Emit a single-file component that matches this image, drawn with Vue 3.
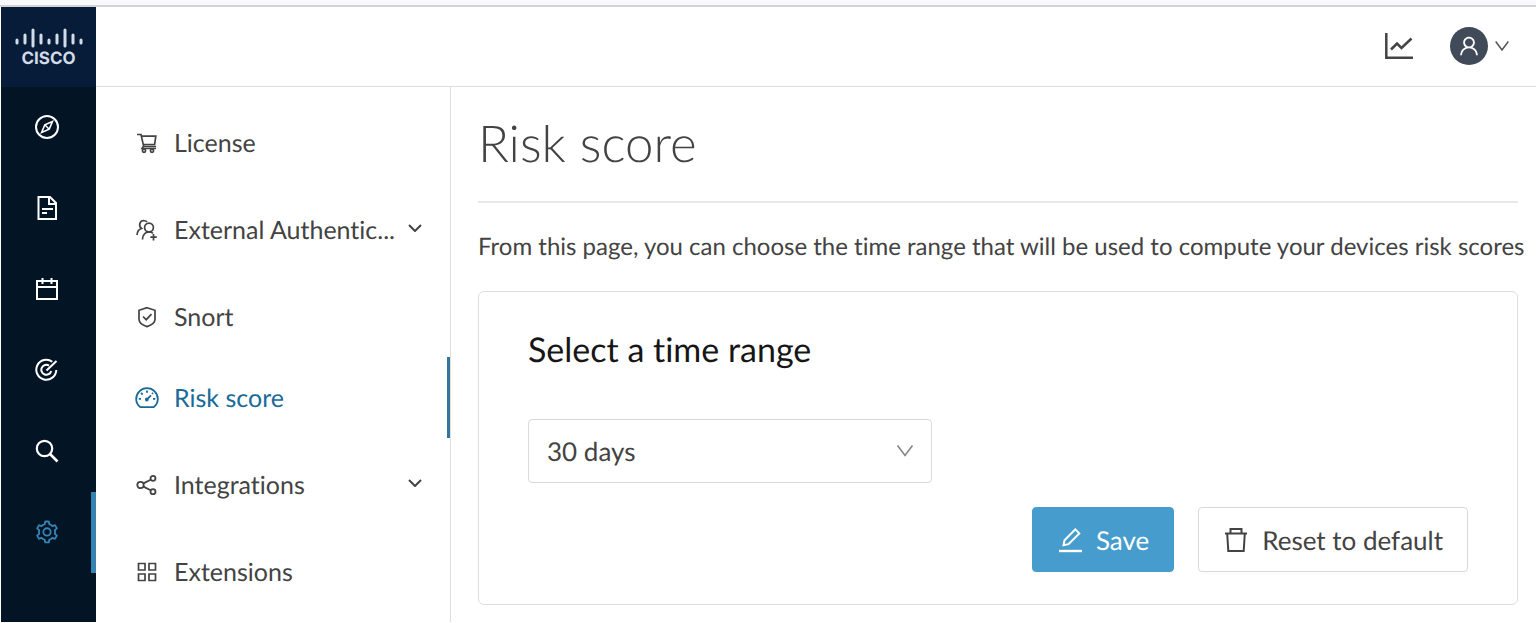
<script setup>
import { ref } from 'vue'

const range = ref('30 days')
const ranges = ['7 days', '30 days', '90 days']

const bars = [
  { x: 2, y: 11, h: 5 },
  { x: 10, y: 6, h: 10 },
  { x: 18, y: 1, h: 18 },
  { x: 26, y: 6, h: 10 },
  { x: 34, y: 11, h: 5 },
  { x: 42, y: 6, h: 10 },
  { x: 50, y: 1, h: 18 },
  { x: 58, y: 6, h: 10 },
  { x: 66, y: 11, h: 5 }
]
</script>

<template>
  <div class="page">
    <div class="strip"></div>
    <div class="shell">
      <nav class="rail" aria-label="Main">
        <a class="logo" href="#" aria-label="Cisco home">
          <svg width="68" height="20" viewBox="0 0 68 20" fill="none" stroke="#d3dbe8" stroke-width="3" stroke-linecap="round">
            <path v-for="b in bars" :key="b.x" :d="`M${b.x} ${b.y + 1}v${b.h - 2}`" />
          </svg>
          <span class="brand">CISCO</span>
        </a>
        <a class="rail-item" href="#" aria-label="Explore">
          <svg class="i24" viewBox="0 0 24 24" fill="none" stroke="currentColor" stroke-width="2">
            <circle cx="12" cy="12" r="11" />
            <path d="M17.4 6.6l-3.2 7.6-7.6 3.2 3.2-7.6zM9.8 9.8l4.4 4.4" stroke-width="1.6" />
          </svg>
        </a>
        <a class="rail-item" href="#" aria-label="Reports">
          <svg class="i24" viewBox="0 0 24 24" fill="none" stroke="currentColor" stroke-width="2">
            <path d="M3.5 1H15l6 6v16H3.5zM14 1v7h7M7 13h11M7 17h5" />
          </svg>
        </a>
        <a class="rail-item" href="#" aria-label="Events">
          <svg class="i24" viewBox="0 0 24 24" fill="none" stroke="currentColor" stroke-width="2">
            <path d="M2 4h20v18H2zM2 10h20M7.500 1v6M16.500 1v6" />
          </svg>
        </a>
        <a class="rail-item" href="#" aria-label="Monitor">
          <svg class="i24" viewBox="0 0 24 24" fill="none" stroke="currentColor" stroke-width="2">
            <path d="M17.300 3.700A10 10 0 1 0 21.300 12M14 7.600A5 5 0 1 0 16.200 13M11.500 12.500L21.500 3" />
          </svg>
        </a>
        <a class="rail-item" href="#" aria-label="Search">
          <svg class="i24" viewBox="0 0 24 24" fill="none" stroke="currentColor" stroke-width="2.200">
            <circle cx="9.500" cy="9.500" r="7.700" />
            <path d="M15 15l7.500 7.500" stroke-width="2.600" />
          </svg>
        </a>
        <a class="rail-item active" href="#" aria-label="Settings" aria-current="page">
          <svg class="i26" viewBox="0 0 1024 1024" fill="currentColor">
            <path d="M924.8 625.7l-65.5-56c3.1-19 4.7-38.4 4.7-57.8s-1.6-38.8-4.7-57.8l65.5-56a32.03 32.03 0 009.3-35.2l-.9-2.6a443.74 443.74 0 00-79.7-137.900l-1.800-2.100a32.12 32.12 0 00-35.100-9.500l-81.300 28.900c-30-24.600-63.500-44-99.700-57.600l-15.700-85a32.05 32.05 0 00-25.800-25.700l-2.700-.5c-52.100-9.400-106.900-9.400-159 0l-2.700.5a32.05 32.05 0 00-25.800 25.700l-15.800 85.400a351.860 351.860 0 00-99 57.400l-81.900-29.100a32 32 0 00-35.100 9.500l-1.800 2.100a446.020 446.020 0 00-79.700 137.900l-.9 2.600c-4.500 12.500-.8 26.500 9.300 35.200l66.300 56.600c-3.100 18.800-4.600 38-4.600 57.100 0 19.200 1.500 38.400 4.600 57.100L99 625.500a32.030 32.030 0 00-9.300 35.200l.9 2.600c18.100 50.400 44.900 96.900 79.700 137.900l1.800 2.100a32.120 32.120 0 0035.100 9.500l81.900-29.100c29.800 24.500 63.100 43.900 99 57.400l15.800 85.400a32.050 32.050 0 0025.800 25.700l2.700.5a449.400 449.400 0 00159 0l2.700-.5a32.050 32.050 0 0025.800-25.700l15.700-85a350 350 0 0099.700-57.600l81.300 28.900a32 32 0 0035.100-9.500l1.800-2.100c34.800-41.100 61.600-87.500 79.700-137.900l.9-2.600c4.500-12.300.8-26.300-9.300-35zM788.300 465.900c2.500 15.100 3.800 30.600 3.800 46.100s-1.300 31-3.800 46.100l-6.600 40.100 74.700 63.900a370.030 370.030 0 01-42.600 73.600L721 702.800l-31.400 25.800c-23.900 19.600-50.500 35-79.300 45.800l-38.100 14.300-17.900 97a377.500 377.500 0 01-85 0l-17.900-97.200-37.800-14.500c-28.500-10.800-55-26.200-78.700-45.700l-31.400-25.900-93.400 33.200c-17-22.900-31.200-47.600-42.600-73.600l75.500-64.500-6.500-40c-2.400-14.900-3.700-30.300-3.700-45.500 0-15.300 1.200-30.600 3.700-45.500l6.500-40-75.500-64.500c11.300-26.100 25.600-50.700 42.600-73.600l93.400 33.200 31.400-25.900c23.700-19.500 50.200-34.900 78.700-45.700l37.900-14.300 17.900-97.200c28.100-3.200 56.800-3.200 85 0l17.900 97 38.100 14.300c28.700 10.800 55.400 26.200 79.300 45.800l31.400 25.800 92.800-32.900c17 22.900 31.200 47.600 42.600 73.600L781.800 426l6.500 39.900z" />
            <circle cx="512" cy="510" r="145" fill="none" stroke="currentColor" stroke-width="72" />
          </svg>
        </a>
      </nav>

      <div class="body">
        <header class="topbar">
          <button class="plain" type="button" aria-label="Charts">
            <svg width="30" height="28" viewBox="0 0 30 28" fill="none" stroke="#444" stroke-width="2.500">
              <path d="M2.300 1v24.700H29M7 17.500l6-6 4.500 4.500L27.500 6.500" />
            </svg>
          </button>
          <button class="plain account" type="button" aria-label="Account">
            <span class="avatar">
              <svg width="24" height="24" viewBox="0 0 1024 1024" fill="#fff">
                <path d="M858.500 763.600a374 374 0 00-80.600-119.500 375.630 375.630 0 00-119.500-80.600c-.4-.2-.8-.3-1.200-.5C719.500 518 760 444.700 760 362c0-137-111-248-248-248S264 225 264 362c0 82.700 40.500 156 102.800 201.100-.4.2-.8.3-1.200.5-44.800 18.900-85 46-119.500 80.600a375.630 375.630 0 00-80.600 119.500A371.700 371.700 0 00136 901.800a8 8 0 008 8.200h60c4.400 0 7.900-3.500 8-7.800 2-77.200 33-149.500 87.800-204.300 56.700-56.700 132-87.900 212.200-87.900s155.500 31.200 212.200 87.900C779 752.700 810 825 812 902.200c.1 4.400 3.600 7.800 8 7.800h60a8 8 0 008-8.200c-1-47.800-10.900-94.300-29.500-138.200zM512 534c-45.900 0-89.100-17.900-121.600-50.400S340 407.900 340 362c0-45.900 17.900-89.100 50.400-121.600S466.100 190 512 190s89.100 17.900 121.600 50.400S684 316.100 684 362c0 45.900-17.900 89.100-50.400 121.600S557.900 534 512 534z" />
              </svg>
            </span>
            <svg width="14" height="10" viewBox="0 0 14 10" fill="none" stroke="#555" stroke-width="1.500">
              <path d="M.7.5L7 9 13.300.5" />
            </svg>
          </button>
        </header>

        <div class="columns">
          <nav class="menu" aria-label="Settings">
            <a class="entry" href="#">
              <svg class="i24" viewBox="0 0 24 24" fill="none" stroke="currentColor" stroke-width="1.700">
                <path d="M2 3.500h4L8.700 15.500H21M6.500 5.200h14.300L19.600 13.500H8.200M8.300 15.500L7 17.500h14" />
                <circle cx="9" cy="19.700" r="1.600" />
                <circle cx="17" cy="19.700" r="1.600" />
              </svg>
              <span class="label">License</span>
            </a>
            <a class="entry group" href="#">
              <svg class="i24" viewBox="0 0 24 24" fill="none" stroke="currentColor" stroke-width="1.700">
                <circle cx="14" cy="9.500" r="4.400" />
                <path d="M7.500 21.500c0-4.500 2.800-7.600 6.500-7.600 1.600 0 2.800.4 4 1.400M18.500 16v6.500M15.300 19.200h6.500M2 17c.2-3.500 1.800-5.600 4.500-6.500C3.300 8.200 4.500 2.700 8.500 2.500c1.700 0 2.700.5 3.600 1.400" />
              </svg>
              <span class="label">External Authentic...</span>
              <svg class="arrow" viewBox="0 0 14 8" fill="none" stroke="currentColor" stroke-width="2"><path d="M1 1l6 6 6-6" /></svg>
            </a>
            <a class="entry" href="#">
              <svg class="i24" viewBox="0 0 24 24" fill="none" stroke="currentColor" stroke-width="1.700">
                <path d="M12 2.700l8 2.600v9c0 3.700-4 6-8 7.300-4-1.300-8-3.600-8-7.300v-9zM8 11.500l3.200 3.200 5.300-5.500" />
              </svg>
              <span class="label">Snort</span>
            </a>
            <a class="entry active" href="#" aria-current="page">
              <svg class="i24" viewBox="0 0 24 24" fill="none" stroke="currentColor" stroke-width="1.800">
                <path d="M5.500 21.200C2.500 19 1.200 16.200 1.200 13a10.800 10.800 0 0 1 21.600 0c0 3.200-1.300 6-4.300 8.200zM11.500 13.800L16 9.300" />
                <path d="M12 4.500v2.300M3.700 12.800H6M18 12.800h2.300M6 6.900l1.700 1.700M18 6.900l-1 1" />
                <circle cx="11.800" cy="13.500" r="1" />
              </svg>
              <span class="label">Risk score</span>
            </a>
            <a class="entry group" href="#">
              <svg class="i24" viewBox="0 0 24 24" fill="none" stroke="currentColor" stroke-width="1.800">
                <circle cx="5.500" cy="12" r="3.200" />
                <circle cx="18" cy="5.300" r="2.500" />
                <circle cx="18" cy="18.700" r="2.500" />
                <path d="M8.400 10.400l7.300-3.700M8.400 13.600l7.300 3.700" />
              </svg>
              <span class="label">Integrations</span>
              <svg class="arrow" viewBox="0 0 14 8" fill="none" stroke="currentColor" stroke-width="2"><path d="M1 1l6 6 6-6" /></svg>
            </a>
            <a class="entry" href="#">
              <svg class="i24" viewBox="0 0 24 24" fill="none" stroke="currentColor" stroke-width="1.700">
                <path d="M3.500 3.500h6.500v6.500H3.500zM14 3.500h6.500v6.500H14zM3.500 14h6.500v6.500H3.500zM14 14h6.500v6.500H14z" />
              </svg>
              <span class="label">Extensions</span>
            </a>
          </nav>

          <main class="main">
            <h1>Risk score</h1>
            <p class="intro">From this page, you can choose the time range that will be used to compute your devices risk scores</p>
            <section class="card">
              <h2><label for="range">Select a time range</label></h2>
              <div class="select">
                <select id="range" v-model="range">
                  <option v-for="r in ranges" :key="r">{{ r }}</option>
                </select>
                <svg class="caret" width="18" height="12" viewBox="0 0 18 12" fill="none" stroke="#858585" stroke-width="1.600">
                  <path d="M1.500.5L9 10.500 16.500.5" />
                </svg>
              </div>
              <div class="actions">
                <button class="btn primary" type="button">
                  <svg class="i26" viewBox="0 0 26 26" fill="none" stroke="currentColor" stroke-width="2">
                    <path d="M2 24h23" stroke-width="2.400" />
                    <path d="M6.500 18.200l1-5L18.300 2.400l4 4L11.500 17.200z" />
                  </svg>
                  Save
                </button>
                <button class="btn" type="button">
                  <svg class="i26" viewBox="0 0 26 26" fill="none" stroke="currentColor" stroke-width="2">
                    <path d="M2 6.500h22M7.500 6.500V2h11v4.500M4.200 6.500L5.300 24h15.400l1.100-17.500" />
                  </svg>
                  Reset to default
                </button>
              </div>
            </section>
          </main>
        </div>
      </div>
    </div>
  </div>
</template>

<style>
body {
  background: #fff;
}
</style>

<style scoped>
* {
  box-sizing: border-box;
}
.page {
  min-height: 100vh;
  display: flex;
  flex-direction: column;
  padding: 0 0 1px 1px;
  font-family: Lato, "Liberation Sans", sans-serif;
  font-size: 24px;
  line-height: 32px;
  font-variant-ligatures: none;
  text-rendering: geometricPrecision;
  color: #434343;
}
a {
  color: inherit;
  text-decoration: none;
}
button,
select {
  font: inherit;
  font-variant-ligatures: none;
  text-rendering: inherit;
  color: inherit;
}
svg {
  display: block;
  flex: none;
}
.i24 {
  width: 24px;
  height: 24px;
}
.i26 {
  width: 26px;
  height: 26px;
}
.strip {
  height: 7px;
  margin-left: -1px;
  background: #f9f9fb;
  border-bottom: 2px solid #d2d3d5;
}
.shell {
  flex: 1;
  display: flex;
}
.rail {
  width: 95px;
  flex: none;
  background: #031425;
  color: #fff;
}
.logo {
  height: 80px;
  display: flex;
  flex-direction: column;
  align-items: center;
  justify-content: center;
  gap: 2px;
  padding-top: 2px;
  background: #061c38;
}
.brand {
  font-family: Inter, Lato, sans-serif;
  font-size: 17px;
  line-height: 18px;
  font-weight: 700;
  color: #d3dbe8;
}
.rail-item {
  height: 81px;
  display: flex;
  align-items: center;
  justify-content: center;
  padding: 0 4px 2px 0;
  position: relative;
}
.rail-item.active {
  color: #3584b4;
}
.rail-item.active::after {
  content: "";
  position: absolute;
  right: 0;
  top: 0;
  bottom: 0;
  width: 5px;
  background: #3682b0;
}
.body {
  flex: 1;
  min-width: 0;
  display: flex;
  flex-direction: column;
}
.topbar {
  height: 80px;
  border-bottom: 1px solid #dedede;
  display: flex;
  align-items: center;
  justify-content: flex-end;
  gap: 36px;
  padding: 0 27px 2px 0;
}
.plain {
  display: flex;
  align-items: center;
  padding: 0;
  border: 0;
  background: none;
}
.account {
  gap: 7px;
}
.avatar {
  width: 38px;
  height: 38px;
  border-radius: 50%;
  background: #414a58;
  display: flex;
  align-items: center;
  justify-content: center;
}
.columns {
  flex: 1;
  display: flex;
}
.menu {
  width: 355px;
  flex: none;
  padding-top: 15px;
  border-right: 1px solid #dedede;
  font-size: 25px;
}
.entry {
  height: 81px;
  display: flex;
  align-items: center;
  padding: 0 28px 0 39px;
  position: relative;
}
.entry .label {
  margin-left: 15px;
  white-space: nowrap;
}
.entry.group {
  height: 93px;
}
.arrow {
  width: 14px;
  height: 8px;
  margin: 0 0 4px auto;
}
.entry.active {
  color: #196a96;
}
.entry.active::after {
  content: "";
  position: absolute;
  right: 0;
  top: 0;
  bottom: 0;
  width: 3px;
  background: #35739a;
}
.main {
  flex: 1;
  min-width: 0;
  padding: 22px 18px 16px 27px;
}
h1 {
  margin: 0;
  padding: 2px 0 26px;
  border-bottom: 2px solid #e8e8e8;
  font-size: 51px;
  line-height: 64px;
  font-weight: 300;
}
.intro {
  margin: 28px 0;
  white-space: nowrap;
}
.card {
  border: 1px solid #dedede;
  border-radius: 6px;
  padding: 38px 49px 32px;
}
h2 {
  margin: 0 0 49px;
  font-size: 34px;
  line-height: 40px;
  font-weight: 400;
  color: #161616;
}
.select {
  position: relative;
  width: 404px;
  max-width: 100%;
}
select {
  display: block;
  appearance: none;
  width: 100%;
  height: 64px;
  padding: 0 18px;
  border: 1px solid #d9d9d9;
  border-radius: 4px;
  background: #fff;
  font-size: 26px;
}
.caret {
  position: absolute;
  right: 18px;
  top: 26px;
  pointer-events: none;
}
.actions {
  display: flex;
  justify-content: flex-end;
  gap: 24px;
  margin-top: 24px;
}
.btn {
  height: 65px;
  display: flex;
  align-items: center;
  gap: 13px;
  padding: 0 24px;
  border: 1px solid #d9d9d9;
  border-radius: 4px;
  background: #fff;
  font-size: 26px;
  box-shadow: 0 2px 2px rgba(0, 0, 0, 0.02);
}
.btn.primary {
  border-color: #469ccc;
  background: #469ccc;
  color: #fff;
}
</style>
